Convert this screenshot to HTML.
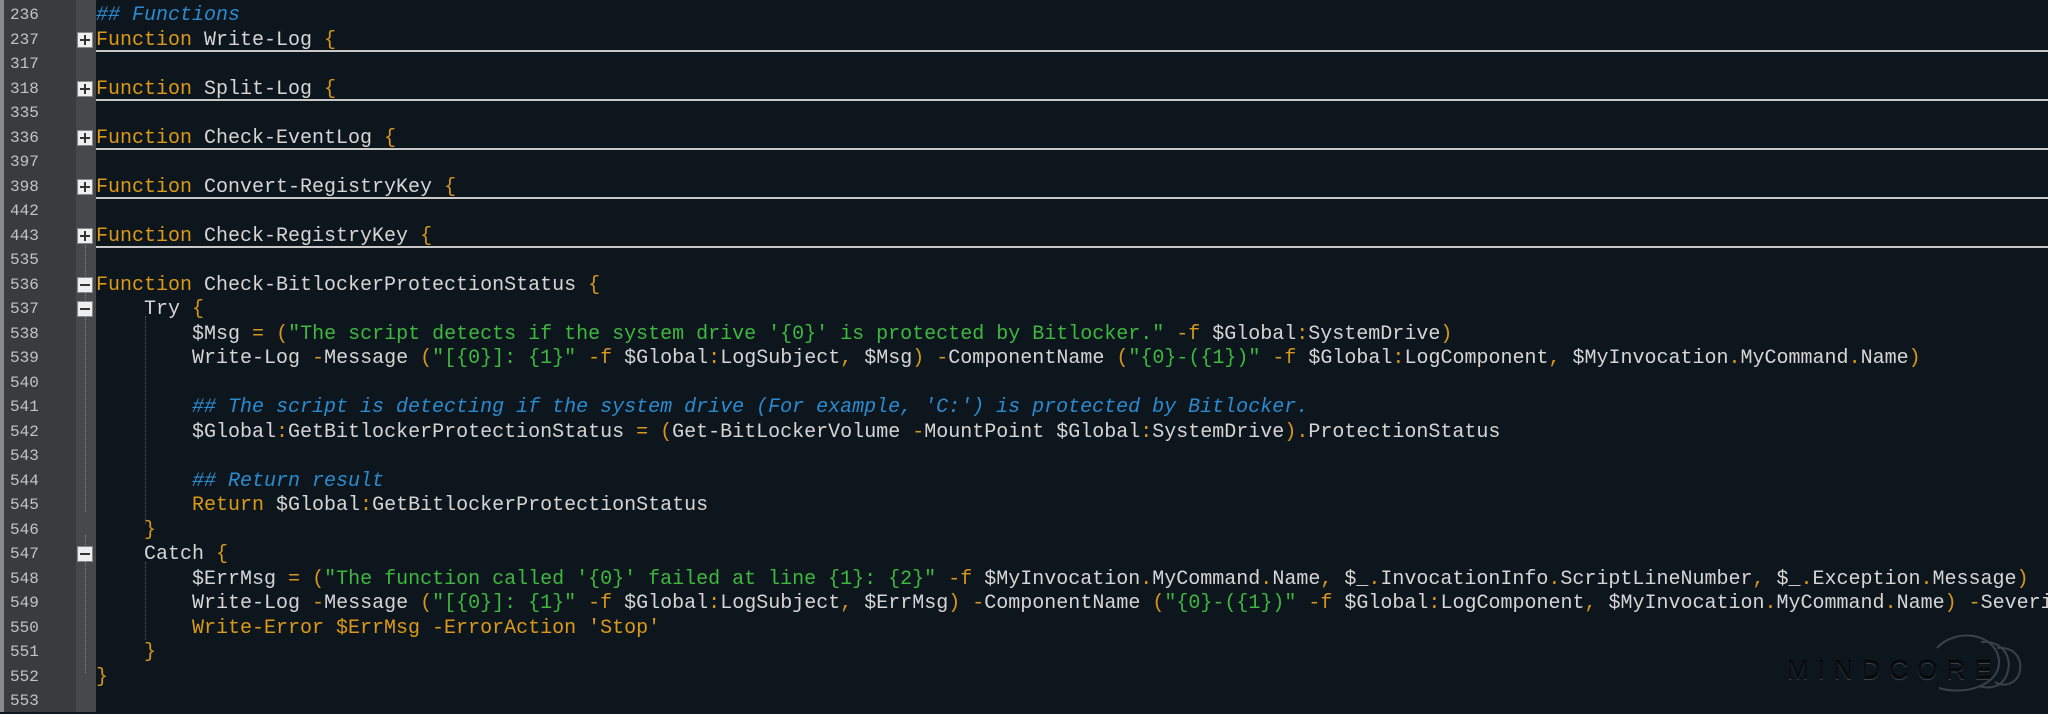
<!DOCTYPE html>
<html><head><meta charset="utf-8"><style>
html,body{margin:0;padding:0;background:#0d161d;width:2048px;height:712px;overflow:hidden}
.g1{position:absolute;left:0;top:0;width:4px;height:712px;background:#8a8a8a}
.g2{position:absolute;left:4px;top:0;width:72px;height:712px;background:#393b3d}
.g3{position:absolute;left:76px;top:0;width:20px;height:712px;background:#46484a}
.row{position:absolute;left:0;height:24.5px;width:2048px}
.n{position:absolute;left:10px;top:3px;font:16px "Liberation Mono",monospace;color:#c4c4c4}
.t{position:absolute;left:96px;top:1px;font:20px/24px "Liberation Mono",monospace;color:#d6d6d6;white-space:pre}
.k{color:#dc9a18}.o{color:#d8961a}.s{color:#3fb83f}.c{color:#2b8bd0;font-style:italic}
.sep{position:absolute;left:96px;right:0;bottom:0;height:2px;background:#c8c8c8}
.box{position:absolute;left:77px;top:4px;width:16px;height:16px;background:#eee;border:1px solid #888;box-sizing:border-box}
.box:before{content:"";position:absolute;left:2px;top:6px;width:10px;height:2px;background:#333}
.plus:after{content:"";position:absolute;left:6px;top:2px;width:2px;height:10px;background:#333}
.vl{position:absolute;border-left:1px dotted #888}
.logo{position:absolute;left:1787px;top:655px;font:26px "Liberation Sans",sans-serif;letter-spacing:9px;color:#0a0f14;text-shadow:0 1px 0 #3a4148,0 -1px 0 #000}
</style></head><body>
<div class="g1"></div><div class="g2"></div><div class="g3"></div>
<div class="vl" style="left:85px;top:245px;height:267px"></div>
<div class="vl" style="left:85px;top:535px;height:138px"></div>
<div class="vl" style="left:145px;top:316px;height:208px;border-left-color:#555"></div>
<div class="vl" style="left:145px;top:562px;height:78px;border-left-color:#555"></div>

<div class="row" style="top:3px"><span class="n">236</span><span class="t"><span class="c">## Functions</span></span></div>
<div class="row" style="top:27.5px"><span class="n">237</span><span class="box plus"></span><span class="t"><span class="k">Function</span> Write-Log <span class="o">{</span></span><div class="sep"></div></div>
<div class="row" style="top:52px"><span class="n">317</span></div>
<div class="row" style="top:76.5px"><span class="n">318</span><span class="box plus"></span><span class="t"><span class="k">Function</span> Split-Log <span class="o">{</span></span><div class="sep"></div></div>
<div class="row" style="top:101px"><span class="n">335</span></div>
<div class="row" style="top:125.5px"><span class="n">336</span><span class="box plus"></span><span class="t"><span class="k">Function</span> Check-EventLog <span class="o">{</span></span><div class="sep"></div></div>
<div class="row" style="top:150px"><span class="n">397</span></div>
<div class="row" style="top:174.5px"><span class="n">398</span><span class="box plus"></span><span class="t"><span class="k">Function</span> Convert-RegistryKey <span class="o">{</span></span><div class="sep"></div></div>
<div class="row" style="top:199px"><span class="n">442</span></div>
<div class="row" style="top:223.5px"><span class="n">443</span><span class="box plus"></span><span class="t"><span class="k">Function</span> Check-RegistryKey <span class="o">{</span></span><div class="sep"></div></div>
<div class="row" style="top:248px"><span class="n">535</span></div>
<div class="row" style="top:272.5px"><span class="n">536</span><span class="box"></span><span class="t"><span class="k">Function</span> Check-BitlockerProtectionStatus <span class="o">{</span></span></div>
<div class="row" style="top:297px"><span class="n">537</span><span class="box"></span><span class="t">    Try <span class="o">{</span></span></div>
<div class="row" style="top:321.5px"><span class="n">538</span><span class="t">        $Msg <span class="o">=</span> <span class="o">(</span><span class="s">"The script detects if the system drive '{0}' is protected by Bitlocker."</span> <span class="o">-f</span> $Global<span class="o">:</span>SystemDrive<span class="o">)</span></span></div>
<div class="row" style="top:346px"><span class="n">539</span><span class="t">        Write-Log <span class="o">-</span>Message <span class="o">(</span><span class="s">"[{0}]: {1}"</span> <span class="o">-f</span> $Global<span class="o">:</span>LogSubject<span class="o">,</span> $Msg<span class="o">)</span> <span class="o">-</span>ComponentName <span class="o">(</span><span class="s">"{0}-({1})"</span> <span class="o">-f</span> $Global<span class="o">:</span>LogComponent<span class="o">,</span> $MyInvocation<span class="o">.</span>MyCommand<span class="o">.</span>Name<span class="o">)</span></span></div>
<div class="row" style="top:370.5px"><span class="n">540</span></div>
<div class="row" style="top:395px"><span class="n">541</span><span class="t">        <span class="c">## The script is detecting if the system drive (For example, 'C:') is protected by Bitlocker.</span></span></div>
<div class="row" style="top:419.5px"><span class="n">542</span><span class="t">        $Global<span class="o">:</span>GetBitlockerProtectionStatus <span class="o">=</span> <span class="o">(</span>Get-BitLockerVolume <span class="o">-</span>MountPoint $Global<span class="o">:</span>SystemDrive<span class="o">).</span>ProtectionStatus</span></div>
<div class="row" style="top:444px"><span class="n">543</span></div>
<div class="row" style="top:468.5px"><span class="n">544</span><span class="t">        <span class="c">## Return result</span></span></div>
<div class="row" style="top:493px"><span class="n">545</span><span class="t">        <span class="k">Return</span> $Global<span class="o">:</span>GetBitlockerProtectionStatus</span></div>
<div class="row" style="top:517.5px"><span class="n">546</span><span class="t">    <span class="o">}</span></span></div>
<div class="row" style="top:542px"><span class="n">547</span><span class="box"></span><span class="t">    Catch <span class="o">{</span></span></div>
<div class="row" style="top:566.5px"><span class="n">548</span><span class="t">        $ErrMsg <span class="o">=</span> <span class="o">(</span><span class="s">"The function called '{0}' failed at line {1}: {2}"</span> <span class="o">-f</span> $MyInvocation<span class="o">.</span>MyCommand<span class="o">.</span>Name<span class="o">,</span> $_<span class="o">.</span>InvocationInfo<span class="o">.</span>ScriptLineNumber<span class="o">,</span> $_<span class="o">.</span>Exception<span class="o">.</span>Message<span class="o">)</span></span></div>
<div class="row" style="top:591px"><span class="n">549</span><span class="t">        Write-Log <span class="o">-</span>Message <span class="o">(</span><span class="s">"[{0}]: {1}"</span> <span class="o">-f</span> $Global<span class="o">:</span>LogSubject<span class="o">,</span> $ErrMsg<span class="o">)</span> <span class="o">-</span>ComponentName <span class="o">(</span><span class="s">"{0}-({1})"</span> <span class="o">-f</span> $Global<span class="o">:</span>LogComponent<span class="o">,</span> $MyInvocation<span class="o">.</span>MyCommand<span class="o">.</span>Name<span class="o">)</span> <span class="o">-</span>Severity 3</span></div>
<div class="row" style="top:615.5px"><span class="n">550</span><span class="t">        <span class="k">Write-Error $ErrMsg -ErrorAction 'Stop'</span></span></div>
<div class="row" style="top:640px"><span class="n">551</span><span class="t">    <span class="o">}</span></span></div>
<div class="row" style="top:664.5px"><span class="n">552</span><span class="t"><span class="o">}</span></span></div>
<div class="row" style="top:689px"><span class="n">553</span></div>

<div class="logo">MINDCORE</div>
<svg style="position:absolute;left:1925px;top:630px" width="120" height="70" viewBox="0 0 120 70" fill="none" stroke="#3a4148" stroke-width="2">
<path d="M12 18 C30 -2 70 2 74 30 C76 55 40 66 14 58"/>
<path d="M56 12 C78 10 88 28 82 44 C78 56 66 60 54 56"/>
<path d="M72 18 C94 16 100 36 92 48 C86 56 76 56 70 52"/>
</svg>
</body></html>
